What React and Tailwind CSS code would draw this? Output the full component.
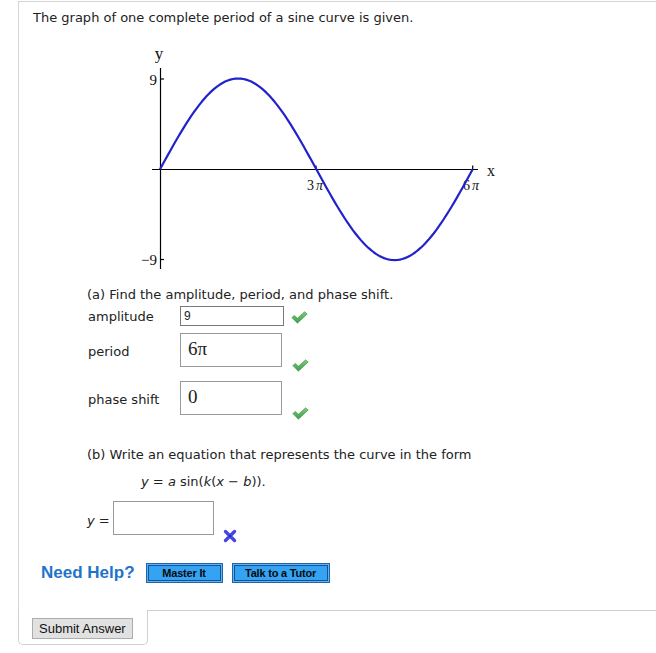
import React from "react";

function curvePath() {
  const x0 = 160, x1 = 472.7, yc = 169.3, amp = 90.8;
  const pts = [];
  const n = 120;
  for (let i = 0; i <= n; i++) {
    const x = x0 + ((x1 - x0) * i) / n;
    const y = yc - amp * Math.sin((2 * Math.PI * (x - x0)) / (x1 - x0));
    pts.push(`${i === 0 ? "M" : "L"}${x.toFixed(2)} ${y.toFixed(2)}`);
  }
  return pts.join(" ");
}

function Graph() {
  return (
    <svg width="380" height="240" className="block ml-[97px] mt-[14px]" style={{ fontFamily: '"Liberation Serif", serif' }}>
      <g transform="translate(-130,-40)">
        <line x1="160.5" y1="68" x2="160.5" y2="269" stroke="#000" strokeWidth="1.2" />
        <line x1="160.5" y1="79" x2="164" y2="79" stroke="#000" strokeWidth="1.2" />
        <line x1="160.5" y1="259.5" x2="164" y2="259.5" stroke="#000" strokeWidth="1.2" />
        <line x1="152" y1="169.5" x2="478" y2="169.5" stroke="#000" strokeWidth="1.2" />
        <line x1="316" y1="165.5" x2="316" y2="169.5" stroke="#000" strokeWidth="1.2" />
        <line x1="472.7" y1="165.5" x2="472.7" y2="169.5" stroke="#000" strokeWidth="1.2" />
        <text x="159" y="59" fontSize="17" textAnchor="middle" fill="#111">y</text>
        <text x="157" y="84.5" fontSize="15" textAnchor="end" fill="#111">9</text>
        <text x="157" y="265" fontSize="15" textAnchor="end" fill="#111">−9</text>
        <text x="307" y="190" fontSize="14" fill="#111">3<tspan fontStyle="italic" dx="2">π</tspan></text>
        <text x="463" y="190" fontSize="14" fill="#111">6<tspan fontStyle="italic" dx="2">π</tspan></text>
        <text x="487" y="176" fontSize="16" fill="#111">x</text>
        <path d={curvePath()} fill="none" stroke="#2222cc" strokeWidth="2.2" strokeLinejoin="round" />
      </g>
    </svg>
  );
}

function Check({ className = "" }) {
  return (
    <svg width="17" height="13" viewBox="0 0 17 13" className={className}>
      <defs>
        <linearGradient id="cg" x1="0" y1="0" x2="0" y2="1">
          <stop offset="0" stopColor="#7ccf7c" />
          <stop offset="1" stopColor="#3f9c46" />
        </linearGradient>
      </defs>
      <path d="M0.8 6.6 L3.4 4.4 L6.4 7.2 L13.6 0.8 L16.2 3.0 L6.4 12.2 Z" fill="url(#cg)" stroke="#3d8d45" strokeWidth="0.6" strokeLinejoin="round" />
    </svg>
  );
}

function XMark({ className = "" }) {
  return (
    <svg width="14" height="14" viewBox="0 0 14 14" className={className}>
      <path d="M2.5 2.5 L11.5 11.5 M11.5 2.5 L2.5 11.5" stroke="#4646e6" strokeWidth="3.4" strokeLinecap="round" />
      <circle cx="7" cy="7" r="1.3" fill="#2a2ab8" />
    </svg>
  );
}

function BlueButton({ w, children }) {
  return (
    <div className={`${w} h-[20px] border border-[#1f64b4] bg-[#5ab6f5] p-[1px]`}>
      <div className="h-full border border-[#1c4f90] bg-[#35a3f3] flex items-center justify-center text-[11px] font-bold text-[#0a0a0a] leading-none" style={{ fontFamily: '"Liberation Sans", Arial, sans-serif', letterSpacing: "-0.2px" }}>
        {children}
      </div>
    </div>
  );
}

export default function App() {
  const verdana = { fontFamily: '"DejaVu Sans", Verdana, sans-serif' };
  return (
    <div className="w-[656px] h-[653px] bg-white overflow-hidden text-[#222]" style={verdana}>
      <div className="ml-[18px] mt-[1px]">
        <div className="h-[609px] border-l border-t border-[#d6d6d6] pl-[14px] pt-[8px]">
          <div className="text-[13px] leading-[16px]">The graph of one complete period of a sine curve is given.</div>
          <Graph />
          <div className="ml-[54px]">
            <div className="mt-[7px] text-[13px] leading-[16px]">(a) Find the amplitude, period, and phase shift.</div>
            <div className="mt-[3px] flex items-center">
              <div className="w-[93px] pl-[1px] text-[13px] leading-[16px] translate-y-[1px]">amplitude</div>
              <div className="w-[104px] h-[20px] border border-[#7a7a7a] pl-[3px] text-[12px] leading-[18px]" style={{ fontFamily: '"Liberation Sans", Arial, sans-serif' }}>9</div>
              <Check className="ml-[7px] translate-y-[1px]" />
            </div>
            <div className="mt-[7px] flex items-center">
              <div className="w-[93px] pl-[1px] text-[13px] leading-[16px] translate-y-[2px]">period</div>
              <div className="w-[102px] h-[34px] border border-[#999] pl-[7px] text-[19px] leading-[30px]" style={{ fontFamily: '"Liberation Serif", serif' }}>6π</div>
              <Check className="ml-[10px] self-end translate-y-[5px]" />
            </div>
            <div className="mt-[14px] flex items-center">
              <div className="w-[93px] pl-[1px] text-[13px] leading-[16px] translate-y-[2px]">phase shift</div>
              <div className="w-[102px] h-[34px] border border-[#999] pl-[7px] text-[19px] leading-[30px]" style={{ fontFamily: '"Liberation Serif", serif' }}>0</div>
              <Check className="ml-[10px] self-end translate-y-[5px]" />
            </div>
            <div className="mt-[32px] text-[13px] leading-[16px]">(b) Write an equation that represents the curve in the form</div>
            <div className="mt-[11px] ml-[54px] text-[13px] leading-[16px]">
              <i>y</i> = <i>a</i> sin(<i>k</i>(<i>x</i> − <i>b</i>)).
            </div>
            <div className="mt-[11px] flex items-center">
              <div className="w-[26px] text-[13px] leading-[16px] translate-y-[3px]"><i>y</i> =</div>
              <div className="w-[101px] h-[34px] border border-[#999]"></div>
              <XMark className="ml-[9px] self-end translate-y-[8px]" />
            </div>
          </div>
          <div className="mt-[28px] ml-[8px] flex items-center">
            <div className="text-[17px] font-bold text-[#1f74c9] leading-[20px] mr-[11px]" style={{ fontFamily: '"Liberation Sans", Arial, sans-serif' }}>Need Help?</div>
            <BlueButton w="w-[77px]">Master It</BlueButton>
            <div className="w-[9px]" />
            <BlueButton w="w-[98px]">Talk to a Tutor</BlueButton>
          </div>
        </div>
        <div className="flex">
          <div className="w-[130px] h-[35px] border-l border-r border-b border-[#d0d0d0] rounded-b-[5px] pl-[13px] pt-[6px]">
            <button className="h-[21px] px-[6px] bg-[#e1e1e1] border border-[#adadad] text-[13px] leading-[19px] text-[#111]" style={{ fontFamily: '"Liberation Sans", Arial, sans-serif' }}>Submit Answer</button>
          </div>
          <div className="flex-1 border-t border-[#d0d0d0]" />
        </div>
      </div>
    </div>
  );
}
